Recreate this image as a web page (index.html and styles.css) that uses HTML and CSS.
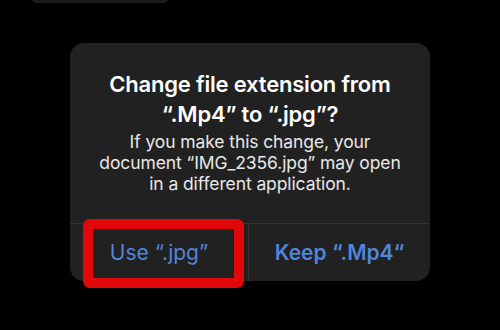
FILE: index.html
```html
<!DOCTYPE html>
<html>
<head>
<meta charset="utf-8">
<link rel="stylesheet" href="styles.css">
</head>
<body>
<div class="topbar"></div>
<div class="dialog">
  <div class="content">
    <h1 class="title">Change file extension from “.Mp4” to “.jpg”?</h1>
    <p class="message">If you make this change, your document “IMG_2356.jpg” may open in a different application.</p>
  </div>
  <div class="actions">
    <div class="action action-use">Use “.jpg”<span class="highlight"></span></div>
    <div class="action action-keep">Keep “.Mp4“</div>
  </div>
</div>
</body>
</html>
```
FILE: styles.css
```css
html, body {
  margin: 0;
  padding: 0;
  background: #000;
  width: 500px;
  height: 330px;
  overflow: hidden;
  font-family: Inter, "Liberation Sans", sans-serif;
}
.topbar {
  width: 140px;
  height: 12px;
  margin: -9px 0 0 30px;
  background: #1c1c1e;
  border-radius: 0 0 8px 8px;
}
.dialog {
  width: 360px;
  margin: 40px 0 0 70px;
  background: #212121;
  border-radius: 14px;
}
.content {
  padding: 26px 16px 29px;
  text-align: center;
  color: #fff;
}
.title {
  margin: 0;
  font-size: 22px;
  line-height: 30px;
  font-weight: 600;
  letter-spacing: -0.2px;
}
.message {
  margin: 2px 8px 0;
  font-size: 17.5px;
  line-height: 21px;
  color: #e8e8e8;
  letter-spacing: -0.1px;
}
.actions {
  display: grid;
  grid-template-columns: 179px 1fr;
  border-top: 1px solid #363636;
  height: 57px;
}
.action {
  display: flex;
  align-items: center;
  justify-content: center;
  font-size: 21px;
  color: #5085da;
  position: relative;
}
.action-use {
  border-right: 1px solid #363636;
}
.action-keep {
  font-weight: 600;
}
.highlight {
  position: absolute;
  left: 13px;
  top: -5px;
  width: 141px;
  height: 49px;
  border: 10px solid #e00808;
  border-radius: 7px;
}
```
